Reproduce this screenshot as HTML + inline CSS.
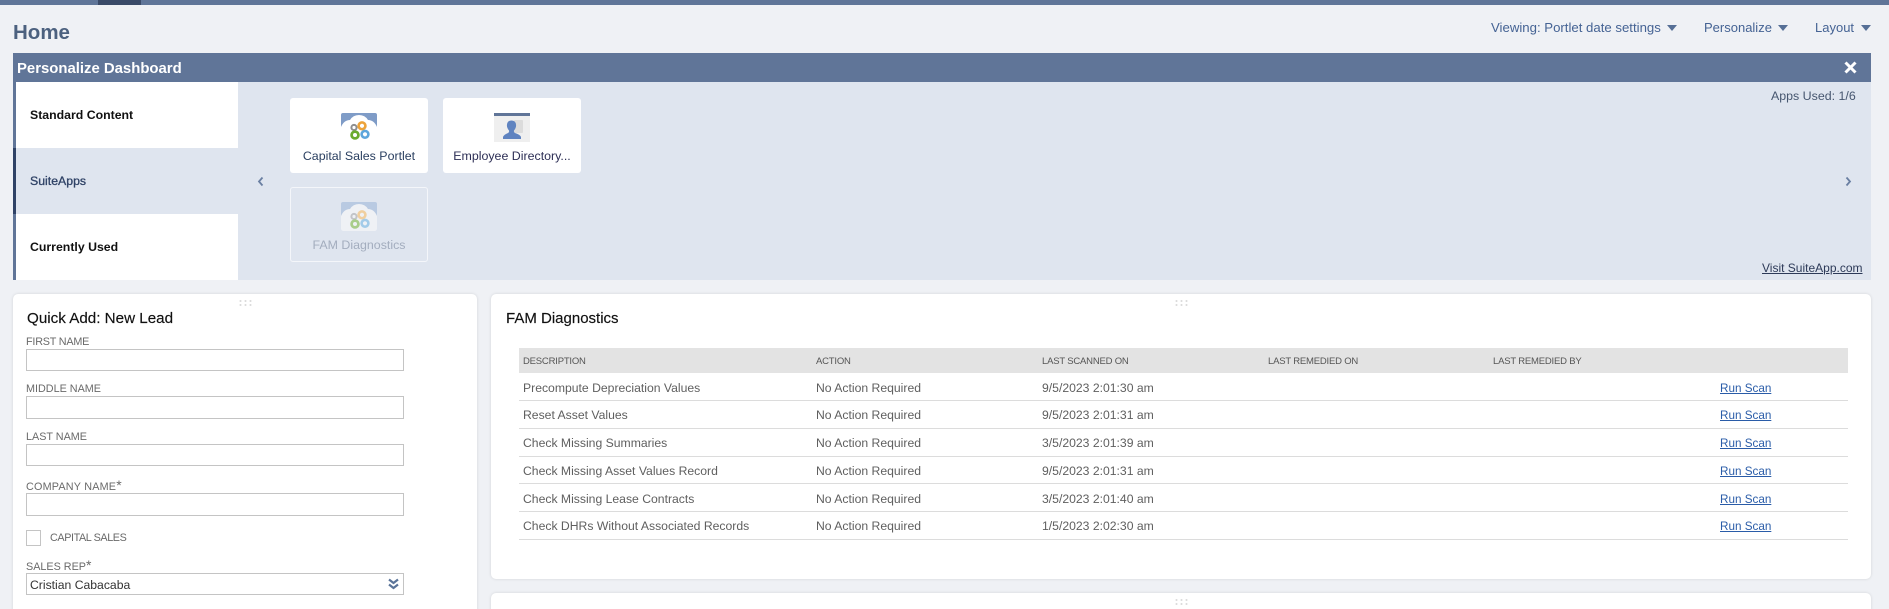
<!DOCTYPE html>
<html>
<head>
<meta charset="utf-8">
<style>
html,body{margin:0;padding:0;width:1889px;height:609px;overflow:hidden;}
body{background:#eff1f5;font-family:"Liberation Sans",sans-serif;font-size:12px;color:#555;}
#w{position:relative;width:1889px;height:609px;overflow:hidden;}
.a{position:absolute;}
.t{position:absolute;white-space:nowrap;line-height:16px;height:16px;}
.card{position:absolute;width:138px;height:75px;background:#fff;border-radius:3px;box-sizing:border-box;}
.lbl{font-size:10.8px;color:#6a6a6a;left:26px;}
.inp{position:absolute;left:26px;width:378px;box-sizing:border-box;border:1px solid #c4c4c4;background:#fff;}
.por{position:absolute;background:#fff;border-radius:5px 5px 0 0;box-shadow:0 0 3px rgba(0,0,0,.12);}
.hd{font-size:9.5px;letter-spacing:-.2px;color:#555;top:354px;}
.row{position:absolute;left:519px;width:1329px;height:1px;background:#dcdcdc;}
.c{font-size:12.2px;color:#5f5f5f;}
.lnk{left:1720px;font-size:11.7px;color:#2a5ca8;text-decoration:underline;margin-top:1px;}
.ctr{text-align:center;width:138px;font-size:12.4px;}
.side{font-weight:bold;font-size:12.3px;color:#111;left:30px;}
.nav{font-size:13px;color:#456394;top:20px;}
.grip{position:absolute;width:15px;height:8px;background-image:radial-gradient(circle,#dcdcdc 1px,transparent 1.1px);background-size:5px 4px;}
</style>
</head>
<body>
<div id="w">
<div class="a" style="left:0;top:0;width:1889px;height:5px;background:#5f7598;"></div>
<div class="a" style="left:98px;top:0;width:43px;height:5px;background:#3a4a68;"></div>

<div class="t" style="left:13px;top:25px;font-size:20.5px;font-weight:bold;color:#4c617f;">Home</div>

<div class="t nav" style="left:1491px;font-size:13.2px;">Viewing: Portlet date settings</div>
<svg class="a" style="left:1667px;top:25px;" width="10" height="6"><path d="M0 0H10L5 6Z" fill="#566f96"/></svg>
<div class="t nav" style="left:1704px;">Personalize</div>
<svg class="a" style="left:1778px;top:25px;" width="10" height="6"><path d="M0 0H10L5 6Z" fill="#566f96"/></svg>
<div class="t nav" style="left:1815px;">Layout</div>
<svg class="a" style="left:1861px;top:25px;" width="10" height="6"><path d="M0 0H10L5 6Z" fill="#566f96"/></svg>

<!-- Personalize panel -->
<div class="a" style="left:13px;top:53px;width:1858px;height:29px;background:#607598;"></div>
<div class="t" style="left:17px;top:60.500px;font-size:14.900px;font-weight:bold;color:#fff;">Personalize Dashboard</div>
<svg class="a" style="left:1844px;top:61px;" width="13" height="13"><path d="M1.5 1.5L11.5 11.5M11.5 1.5L1.5 11.5" stroke="#fff" stroke-width="3"/></svg>
<div class="a" style="left:13px;top:82px;width:1858px;height:198px;background:#dfe5ef;"></div>
<div class="a" style="left:13px;top:82px;width:3px;height:198px;background:#607598;"></div>
<div class="a" style="left:16px;top:82px;width:222px;height:66px;background:#fff;"></div>
<div class="a" style="left:13px;top:148px;width:3px;height:66px;background:#2f4266;"></div>
<div class="a" style="left:16px;top:214px;width:222px;height:66px;background:#fff;"></div>
<div class="t side" style="top:107px;">Standard Content</div>
<div class="t side" style="top:173px;color:#2f4266;font-weight:normal;-webkit-text-stroke:.3px #2f4266;">SuiteApps</div>
<div class="t side" style="top:239px;">Currently Used</div>

<svg class="a" style="left:257px;top:176px;" width="7" height="11"><path d="M5.500 1.500L2 5.500L5.500 9.500" fill="none" stroke="#6a7fa2" stroke-width="1.800"/></svg>
<svg class="a" style="left:1845px;top:176px;" width="7" height="11"><path d="M1.500 1.500L5 5.500L1.500 9.500" fill="none" stroke="#6a7fa2" stroke-width="1.800"/></svg>

<div class="card" style="left:290px;top:98px;"></div>
<svg class="a" style="left:341px;top:113px;" width="36" height="29" viewBox="0 0 36 29">
  <path d="M2 0H34Q36 0 36 2V14Q33 7 27 7Q24 2 18 2Q12 2 9 7Q3 7 0 14V2Q0 0 2 0Z" fill="#7f9cc7"/>
  <g fill="none">
    <circle cx="13" cy="14.500" r="2.600" stroke="#8e8e8e" stroke-width="2"/>
    <circle cx="21" cy="12.800" r="3.400" stroke="#eda33a" stroke-width="2.600"/>
    <circle cx="14" cy="22" r="3.400" stroke="#6cab2e" stroke-width="2.800"/>
    <circle cx="24" cy="21.300" r="3.400" stroke="#5ea6dc" stroke-width="2.600"/>
  </g>
</svg>
<div class="t ctr" style="left:290px;top:148px;color:#2a3f60;">Capital Sales Portlet</div>

<div class="card" style="left:443px;top:98px;"></div>
<svg class="a" style="left:494px;top:113px;" width="36" height="29" viewBox="0 0 36 29">
  <rect width="36" height="29" fill="#efefef"/>
  <rect width="36" height="3" fill="#607598"/>
  <rect x="20" y="7" width="9" height="13" rx="1" fill="#dcdcdc"/>
  <path d="M9 26V24Q10 21.500 14 20Q15.500 19 15 17.500Q12.500 14.500 13 11.500Q13.500 7.500 17.500 7.500Q21.500 7.500 22 11.500Q22.500 14.500 20 17.500Q19.500 19 21 20Q26 21.500 27 24V26Z" fill="#5f83c0"/>
</svg>
<div class="t ctr" style="left:443px;top:148px;color:#2d2f55;">Employee Directory...</div>

<div class="card" style="left:290px;top:187px;background:#dfe5ef;border:1px solid #f4f6fa;"></div>
<svg class="a" style="left:341px;top:202px;" width="36" height="29" viewBox="0 0 36 29">
  <path d="M2 0H34Q36 0 36 2V27Q36 29 34 29H2Q0 29 0 27V2Q0 0 2 0Z" fill="#b9cae2"/>
  <path d="M0 27Q0 29 2 29H34Q36 29 36 27V14Q33 7 27 7Q24 2 18 2Q12 2 9 7Q3 7 0 14Z" fill="#eff1f5"/>
  <g fill="none">
    <circle cx="13" cy="14.500" r="2.600" stroke="#c2c4c8" stroke-width="2"/>
    <circle cx="21" cy="12.800" r="3.400" stroke="#f0cf9f" stroke-width="2.600"/>
    <circle cx="14" cy="22" r="3.400" stroke="#a9cd8b" stroke-width="2.800"/>
    <circle cx="24" cy="21.300" r="3.400" stroke="#a3cbe9" stroke-width="2.600"/>
  </g>
</svg>
<div class="t ctr" style="left:290px;top:237px;color:#a3adbe;">FAM Diagnostics</div>

<div class="t" style="left:1771px;top:88px;font-size:12.4px;color:#46566f;">Apps Used: 1/6</div>
<div class="t" style="left:1762px;top:260px;font-size:12px;color:#2d3a58;text-decoration:underline;">Visit SuiteApp.com</div>

<!-- Quick add -->
<div class="por" style="left:13px;top:294px;width:464px;height:330px;"></div>
<div class="grip" style="left:238px;top:299px;"></div>
<div class="t" style="left:27px;top:311px;font-size:15.200px;color:#111;-webkit-text-stroke:.15px #111;">Quick Add: New Lead</div>
<div class="t lbl" style="top:334px;letter-spacing:-.2px;">FIRST NAME</div>
<div class="inp" style="top:349px;height:22px;"></div>
<div class="t lbl" style="top:381px;">MIDDLE NAME</div>
<div class="inp" style="top:396px;height:23px;"></div>
<div class="t lbl" style="top:429px;">LAST NAME</div>
<div class="inp" style="top:444px;height:22px;"></div>
<div class="t lbl" style="top:477px;letter-spacing:.2px;">COMPANY NAME<span style="font-size:14px;">*</span></div>
<div class="inp" style="top:493px;height:23px;"></div>
<div class="a" style="left:26px;top:530px;width:15px;height:16px;box-sizing:border-box;border:1px solid #c4c4c4;background:#fff;"></div>
<div class="t lbl" style="left:50px;top:530px;letter-spacing:-.4px;">CAPITAL SALES</div>
<div class="t lbl" style="top:557px;">SALES REP<span style="font-size:14px;">*</span></div>
<div class="inp" style="top:573px;height:22px;"></div>
<div class="t" style="left:30px;top:577px;font-size:12.200px;color:#333;">Cristian Cabacaba</div>
<svg class="a" style="left:388px;top:578px;" width="11" height="12"><path d="M1 1.500L5.500 5L10 1.500M1 6.500L5.500 10L10 6.500" fill="none" stroke="#5b7499" stroke-width="2.200"/></svg>

<!-- FAM portlet -->
<div class="por" style="left:491px;top:294px;width:1380px;height:285px;border-radius:5px;"></div>
<div class="grip" style="left:1174px;top:299px;"></div>
<div class="t" style="left:506px;top:311px;font-size:15px;color:#111;-webkit-text-stroke:.15px #111;">FAM Diagnostics</div>
<div class="a" style="left:519px;top:348px;width:1329px;height:25px;background:#e3e3e3;"></div>
<div class="t hd" style="left:523px;">DESCRIPTION</div>
<div class="t hd" style="left:816px;">ACTION</div>
<div class="t hd" style="left:1042px;">LAST SCANNED ON</div>
<div class="t hd" style="left:1268px;">LAST REMEDIED ON</div>
<div class="t hd" style="left:1493px;">LAST REMEDIED BY</div>

<div class="t c" style="left:523px;top:380px;">Precompute Depreciation Values</div>
<div class="t c" style="left:816px;top:380px;">No Action Required</div>
<div class="t c" style="left:1042px;top:380px;">9/5/2023 2:01:30 am</div>
<div class="t lnk" style="top:380px;">Run Scan</div>
<div class="row" style="top:400px;"></div>

<div class="t c" style="left:523px;top:407px;">Reset Asset Values</div>
<div class="t c" style="left:816px;top:407px;">No Action Required</div>
<div class="t c" style="left:1042px;top:407px;">9/5/2023 2:01:31 am</div>
<div class="t lnk" style="top:407px;">Run Scan</div>
<div class="row" style="top:428px;"></div>

<div class="t c" style="left:523px;top:435px;">Check Missing Summaries</div>
<div class="t c" style="left:816px;top:435px;">No Action Required</div>
<div class="t c" style="left:1042px;top:435px;">3/5/2023 2:01:39 am</div>
<div class="t lnk" style="top:435px;">Run Scan</div>
<div class="row" style="top:456px;"></div>

<div class="t c" style="left:523px;top:463px;">Check Missing Asset Values Record</div>
<div class="t c" style="left:816px;top:463px;">No Action Required</div>
<div class="t c" style="left:1042px;top:463px;">9/5/2023 2:01:31 am</div>
<div class="t lnk" style="top:463px;">Run Scan</div>
<div class="row" style="top:483px;"></div>

<div class="t c" style="left:523px;top:491px;">Check Missing Lease Contracts</div>
<div class="t c" style="left:816px;top:491px;">No Action Required</div>
<div class="t c" style="left:1042px;top:491px;">3/5/2023 2:01:40 am</div>
<div class="t lnk" style="top:491px;">Run Scan</div>
<div class="row" style="top:511px;"></div>

<div class="t c" style="left:523px;top:518px;">Check DHRs Without Associated Records</div>
<div class="t c" style="left:816px;top:518px;">No Action Required</div>
<div class="t c" style="left:1042px;top:518px;">1/5/2023 2:02:30 am</div>
<div class="t lnk" style="top:518px;">Run Scan</div>
<div class="row" style="top:539px;"></div>

<!-- next portlet -->
<div class="por" style="left:491px;top:593px;width:1380px;height:40px;"></div>
<div class="grip" style="left:1174px;top:598px;"></div>
</div>
</body>
</html>
